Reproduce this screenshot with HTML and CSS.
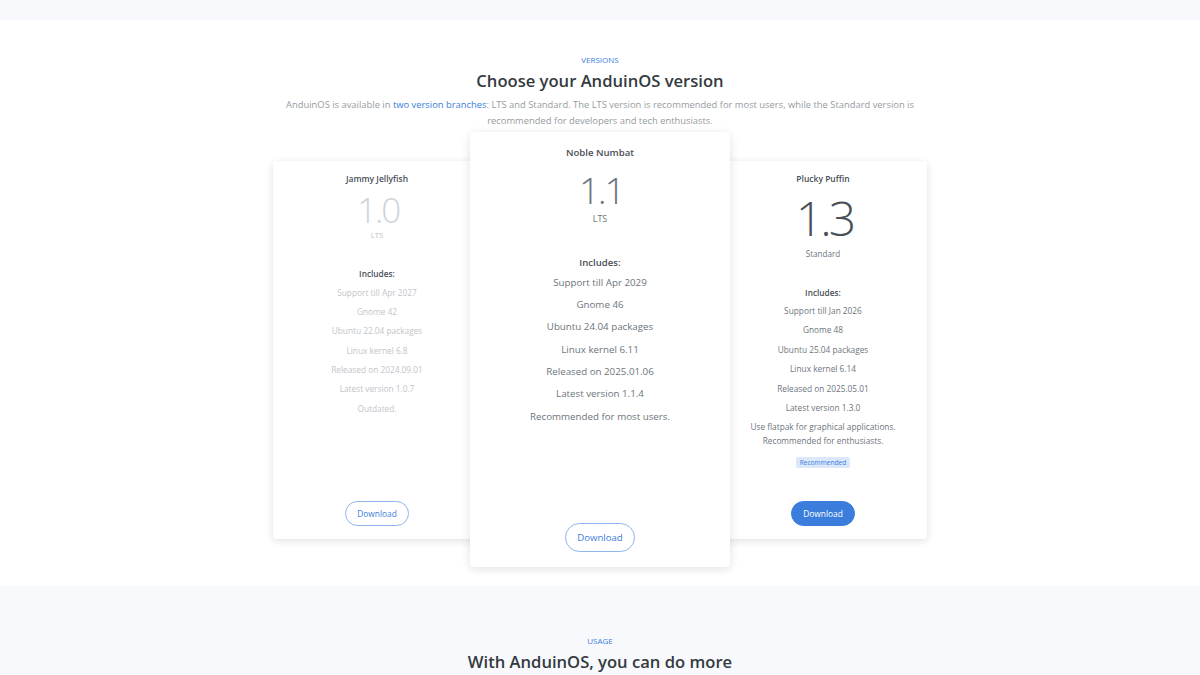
FILE: index.html
```html
<!DOCTYPE html>
<html lang="en">
<head>
  <meta charset="UTF-8" />
  <meta name="viewport" content="width=device-width, initial-scale=1.0"/>
  <title>AnduinOS versions</title>
  <link rel="stylesheet" href="styles.css">
</head>
<body>

  <div class="topband"></div>

  <section class="versions">
    <div class="section-head">
      <div class="eyebrow">VERSIONS</div>
      <h2>Choose your AnduinOS version</h2>
      <p class="lead">
        AnduinOS is available in <a href="#">two version branches</a>: LTS and Standard. The LTS version is recommended for most users, while the Standard version is recommended for developers and tech enthusiasts.
      </p>
    </div>

    <div class="plans">
      <div class="plan plan-old">
        <div class="plan-name">Jammy Jellyfish</div>
        <div class="plan-number">1.0</div>
        <div class="plan-kind">LTS</div>
        <div class="plan-includes">Includes:</div>
        <ul class="plan-list">
          <li>Support till Apr 2027</li>
          <li>Gnome 42</li>
          <li>Ubuntu 22.04 packages</li>
          <li>Linux kernel 6.8</li>
          <li>Released on 2024.09.01</li>
          <li>Latest version 1.0.7</li>
          <li>Outdated.</li>
        </ul>
        <a href="#" class="btn btn-outline">Download</a>
      </div>

      <div class="plan plan-main">
        <div class="plan-name">Noble Numbat</div>
        <div class="plan-number">1.1</div>
        <div class="plan-kind">LTS</div>
        <div class="plan-includes">Includes:</div>
        <ul class="plan-list">
          <li>Support till Apr 2029</li>
          <li>Gnome 46</li>
          <li>Ubuntu 24.04 packages</li>
          <li>Linux kernel 6.11</li>
          <li>Released on 2025.01.06</li>
          <li>Latest version 1.1.4</li>
          <li>Recommended for most users.</li>
        </ul>
        <a href="#" class="btn btn-outline">Download</a>
      </div>

      <div class="plan plan-std">
        <div class="plan-name">Plucky Puffin</div>
        <div class="plan-number">1.3</div>
        <div class="plan-kind">Standard</div>
        <div class="plan-includes">Includes:</div>
        <ul class="plan-list">
          <li>Support till Jan 2026</li>
          <li>Gnome 48</li>
          <li>Ubuntu 25.04 packages</li>
          <li>Linux kernel 6.14</li>
          <li>Released on 2025.05.01</li>
          <li>Latest version 1.3.0</li>
          <li>Use flatpak for graphical applications.<br>Recommended for enthusiasts.</li>
        </ul>
        <span class="badge">Recommended</span>
        <a href="#" class="btn btn-primary">Download</a>
      </div>
    </div>
  </section>

  <section class="usage">
    <div class="section-head">
      <div class="eyebrow">USAGE</div>
      <h2>With AnduinOS, you can do more</h2>
    </div>
  </section>

</body>
</html>
```

FILE: styles.css
```css
body {
  margin: 0;
  font-family: "Open Sans", "Noto Sans", Arial, sans-serif;
  background-color: #fff;
  color: #495057;
}
.topband {
  height: 20px;
  background-color: #f7f9fc;
}
.versions {
  height: 566px;
  background-color: #fff;
}
.section-head {
  text-align: center;
}
.versions .section-head {
  padding-top: 34px;
}
.eyebrow {
  font-size: 8px;
  line-height: 12px;
  color: #3b7ddd;
}
h2 {
  margin: 2px 0 0;
  font-size: 16.6px;
  line-height: 26px;
  font-weight: 600;
  color: #343a40;
}
.lead {
  max-width: 660px;
  margin: 3px auto 0;
  font-size: 9.4px;
  line-height: 16px;
  color: #969ca2;
}
.lead a {
  color: #3b7ddd;
  text-decoration: none;
}

.plans {
  display: flex;
  justify-content: center;
  align-items: center;
  margin-top: 3px;
}
.plan {
  display: flex;
  flex-direction: column;
  align-items: center;
  box-sizing: border-box;
  background-color: #fff;
  border-radius: 3px;
  box-shadow: 0 2px 10px rgba(0,0,0,0.12);
  text-align: center;
}
.plan-old,
.plan-std {
  width: 208px;
  height: 378px;
  padding: 11px 10px 13px;
}
.plan-old {
  margin-right: -11px;
}
.plan-std {
  margin-left: -11px;
}
.plan-main {
  position: relative;
  z-index: 1;
  width: 260px;
  height: 435px;
  padding: 13px 12px 15px;
}
.plan-name {
  font-size: 8.5px;
  line-height: 14px;
  font-weight: 600;
  color: #495057;
}
.plan-number {
  font-weight: 300;
  color: #495057;
  letter-spacing: -0.06em;
  padding-left: 0.06em;
}
.plan-kind {
  font-size: 7.8px;
  line-height: 14px;
  color: #6c757d;
}
.plan-includes {
  font-size: 8.3px;
  line-height: 14px;
  font-weight: 600;
  color: #495057;
}
.plan-list {
  list-style: none;
  margin: 0;
  padding: 0;
  font-size: 8.3px;
  line-height: 14px;
  color: #6c757d;
}
.plan-list li {
  margin-bottom: 5.4px;
}

.plan-old .plan-number {
  margin-top: 6px;
  font-size: 35px;
  line-height: 35px;
  color: #ced4da;
}
.plan-old .plan-kind {
  margin-top: 1px;
}
.plan-old .plan-kind,
.plan-old .plan-list {
  color: #bfc4c9;
}
.plan-old .plan-includes {
  margin-top: 25px;
}
.plan-old .plan-list {
  margin-top: 5px;
}

.plan-main .plan-name {
  font-size: 9.6px;
  line-height: 16px;
}
.plan-main .plan-number {
  margin-top: 10px;
  font-size: 37px;
  line-height: 38px;
  color: #6c757d;
}
.plan-main .plan-kind {
  margin-top: 2.5px;
  font-size: 8.8px;
}
.plan-main .plan-includes {
  margin-top: 29px;
  font-size: 9.6px;
  line-height: 16px;
}
.plan-main .plan-list {
  margin-top: 4px;
  font-size: 9.75px;
  line-height: 16px;
}
.plan-main .plan-list li {
  margin-bottom: 6.4px;
}

.plan-std .plan-number {
  margin-top: 7px;
  font-size: 48px;
  line-height: 50px;
  color: #495057;
}
.plan-std .plan-kind {
  margin-top: 4.5px;
  font-size: 8.1px;
}
.plan-std .plan-includes {
  margin-top: 25px;
}
.plan-std .plan-list {
  margin-top: 4px;
}

.badge {
  margin-top: 3px;
  padding: 0 4px;
  font-size: 6.6px;
  line-height: 11px;
  border-radius: 2px;
  background-color: #dce8fa;
  color: #3b7ddd;
}

.btn {
  margin-top: auto;
  display: inline-block;
  box-sizing: border-box;
  height: 25px;
  padding: 0 11px;
  font-size: 8.4px;
  line-height: 23px;
  border-radius: 13px;
  text-decoration: none;
}
.plan-main .btn {
  height: 29px;
  padding: 0 11.5px;
  font-size: 9.6px;
  line-height: 27px;
  border-radius: 15px;
}
.btn-outline {
  border: 1px solid #8fb4ec;
  color: #3b7ddd;
}
.btn-primary {
  border: 1px solid #3b7ddd;
  background-color: #3b7ddd;
  color: #fff;
}

.usage {
  background-color: #f7f9fc;
  height: 200px;
}
.usage .section-head {
  padding-top: 49px;
}
```
